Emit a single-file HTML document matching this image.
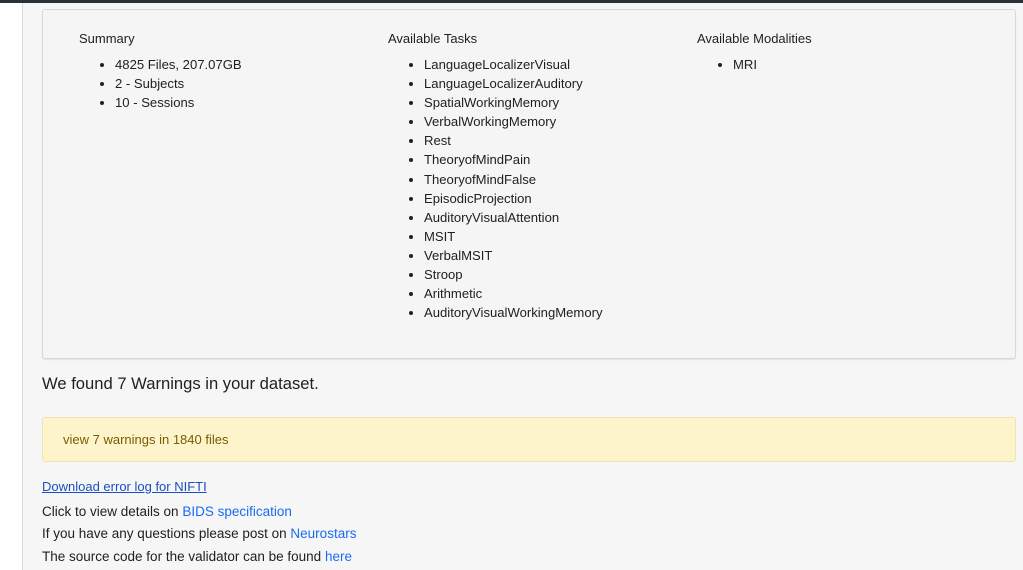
<!DOCTYPE html>
<html><head><meta charset="utf-8"><style>
*{margin:0;padding:0;box-sizing:border-box}
html,body{width:1023px;height:570px;overflow:hidden;background:#f6f6f6;font-family:"Liberation Sans",Arial,sans-serif;color:#212121}
.top{position:absolute;left:0;top:0;width:1023px;height:3px;background:#2b3138}
.side{position:absolute;left:0;top:3px;width:23px;height:567px;background:#fff;border-right:1px solid #dcdcdc}
.panel{position:absolute;left:42px;top:9px;width:974px;height:350px;border:1px solid #d8d8d8;border-radius:3px;background:#f5f5f5;box-shadow:0 1px 1px rgba(0,0,0,.08)}
.col{position:absolute;top:21px;font-size:13.1px}
.col h4{font-weight:normal;font-size:13px;line-height:16px;margin-bottom:8px}
.col ul{margin-left:36px;list-style:disc}
.col li{line-height:19.1px}
h3{position:absolute;left:42px;top:374px;font-size:16.6px;font-weight:normal}
.warn{position:absolute;left:42px;top:417px;width:974px;height:45px;background:#fdf4cc;border:1px solid #f0e3b0;border-radius:3px;color:#7a5c00;font-size:13px;padding:14px 0 0 20px}
.l{position:absolute;left:42px;font-size:13.5px}
a{color:#1a6cf0;text-decoration:none}
a.u{color:#1a4fc0;text-decoration:underline;font-size:13px}
</style></head><body>
<div class="top"></div><div class="side"></div>
<div class="panel">
<div class="col" style="left:36px"><h4>Summary</h4><ul><li>4825 Files, 207.07GB</li><li>2 - Subjects</li><li>10 - Sessions</li></ul></div>
<div class="col" style="left:345px"><h4>Available Tasks</h4><ul><li>LanguageLocalizerVisual</li><li>LanguageLocalizerAuditory</li><li>SpatialWorkingMemory</li><li>VerbalWorkingMemory</li><li>Rest</li><li>TheoryofMindPain</li><li>TheoryofMindFalse</li><li>EpisodicProjection</li><li>AuditoryVisualAttention</li><li>MSIT</li><li>VerbalMSIT</li><li>Stroop</li><li>Arithmetic</li><li>AuditoryVisualWorkingMemory</li></ul></div>
<div class="col" style="left:654px"><h4>Available Modalities</h4><ul><li>MRI</li></ul></div>
</div>
<h3>We found 7 Warnings in your dataset.</h3>
<div class="warn">view 7 warnings in 1840 files</div>
<div class="l" style="top:479px"><a class="u">Download error log for NIFTI</a></div>
<div class="l" style="top:504px">Click to view details on <a>BIDS specification</a></div>
<div class="l" style="top:526px">If you have any questions please post on <a>Neurostars</a></div>
<div class="l" style="top:549px">The source code for the validator can be found <a>here</a></div>
</body></html>
